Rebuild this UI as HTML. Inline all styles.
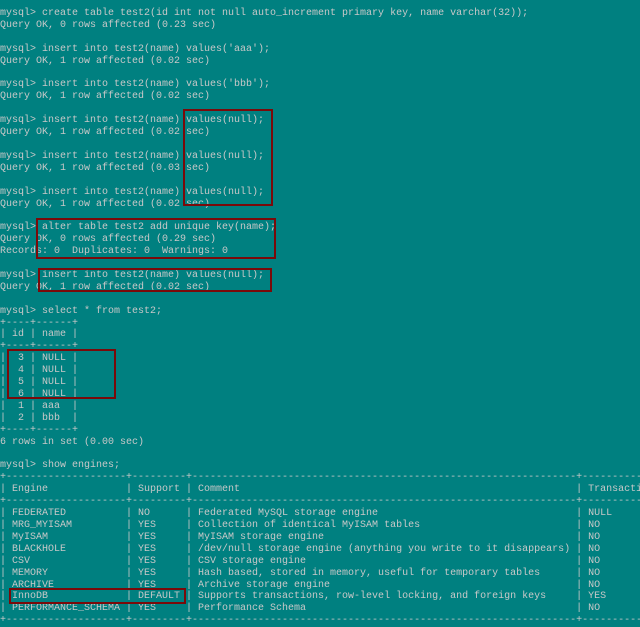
<!DOCTYPE html>
<html><head><meta charset="utf-8"><style>
html,body{margin:0;padding:0;background:#008080;width:640px;height:622px;overflow:hidden}
pre{position:absolute;left:0;top:8px;margin:0;font-family:"Liberation Mono",monospace;font-size:10px;line-height:11.9px;color:#c8c8c8;white-space:pre}
.b{position:absolute;border:2px solid #7a0a0a;box-sizing:border-box}
</style></head><body>
<pre>mysql&gt; create table test2(id int not null auto_increment primary key, name varchar(32));
Query OK, 0 rows affected (0.23 sec)

mysql&gt; insert into test2(name) values('aaa');
Query OK, 1 row affected (0.02 sec)

mysql&gt; insert into test2(name) values('bbb');
Query OK, 1 row affected (0.02 sec)

mysql&gt; insert into test2(name) values(null);
Query OK, 1 row affected (0.02 sec)

mysql&gt; insert into test2(name) values(null);
Query OK, 1 row affected (0.03 sec)

mysql&gt; insert into test2(name) values(null);
Query OK, 1 row affected (0.02 sec)

mysql&gt; alter table test2 add unique key(name);
Query OK, 0 rows affected (0.29 sec)
Records: 0  Duplicates: 0  Warnings: 0

mysql&gt; insert into test2(name) values(null);
Query OK, 1 row affected (0.02 sec)

mysql&gt; select * from test2;
+----+------+
| id | name |
+----+------+
|  3 | NULL |
|  4 | NULL |
|  5 | NULL |
|  6 | NULL |
|  1 | aaa  |
|  2 | bbb  |
+----+------+
6 rows in set (0.00 sec)

mysql&gt; show engines;
+--------------------+---------+----------------------------------------------------------------+--------------+
| Engine             | Support | Comment                                                        | Transactions |
+--------------------+---------+----------------------------------------------------------------+--------------+
| FEDERATED          | NO      | Federated MySQL storage engine                                 | NULL         |
| MRG_MYISAM         | YES     | Collection of identical MyISAM tables                          | NO           |
| MyISAM             | YES     | MyISAM storage engine                                          | NO           |
| BLACKHOLE          | YES     | /dev/null storage engine (anything you write to it disappears) | NO           |
| CSV                | YES     | CSV storage engine                                             | NO           |
| MEMORY             | YES     | Hash based, stored in memory, useful for temporary tables      | NO           |
| ARCHIVE            | YES     | Archive storage engine                                         | NO           |
| InnoDB             | DEFAULT | Supports transactions, row-level locking, and foreign keys     | YES          |
| PERFORMANCE_SCHEMA | YES     | Performance Schema                                             | NO           |
+--------------------+---------+----------------------------------------------------------------+--------------+</pre>
<div class="b" style="left:183px;top:109px;width:90px;height:97px"></div>
<div class="b" style="left:36px;top:218px;width:240px;height:41px"></div>
<div class="b" style="left:38px;top:268px;width:234px;height:24px"></div>
<div class="b" style="left:7px;top:349px;width:109px;height:50px"></div>
<div class="b" style="left:9px;top:588px;width:177px;height:16px"></div>
</body></html>
